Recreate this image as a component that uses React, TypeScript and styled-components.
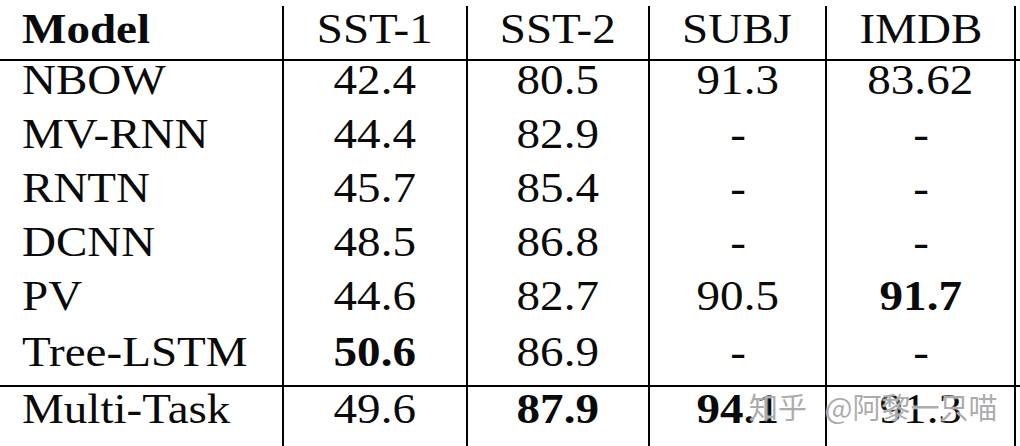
import React from "react";
import styled, { createGlobalStyle } from "styled-components";

const Global = createGlobalStyle`
  html, body { margin: 0; padding: 0; background: #ffffff; }
  body { width: 1020px; height: 446px; overflow: hidden; }
`;

const Page = styled.div`
  position: relative;
  width: 1020px;
  height: 446px;
  overflow: hidden;
  box-sizing: border-box;
  padding-top: 6px;
  background: #ffffff;
  font-family: "Liberation Serif", "Times New Roman", serif;
  color: #0a0a0a;
`;

const Row = styled.div<{ $h: number; $rule?: boolean }>`
  display: grid;
  grid-template-columns: 284px 184px 182px 177px 189px 4px;
  height: ${(p) => p.$h}px;
  box-sizing: border-box;
  border-bottom: ${(p) => (p.$rule ? "2px solid #000" : "none")};
`;

const Cell = styled.div<{ $first?: boolean; $pad: number }>`
  box-sizing: border-box;
  border-right: 2px solid #000;
  padding-top: ${(p) => p.$pad}px;
  padding-left: ${(p) => (p.$first ? 22 : 0)}px;
  text-align: ${(p) => (p.$first ? "left" : "center")};
  font-size: 42px;
  line-height: 38px;
  white-space: nowrap;
  overflow: visible;
`;

const Txt = styled.span<{ $bold?: boolean; $first?: boolean }>`
  display: inline-block;
  font-weight: ${(p) => (p.$bold ? 700 : 400)};
  transform: scaleX(1.12);
  transform-origin: ${(p) => (p.$first ? "left center" : "center center")};
`;

const Watermark = styled.div`
  position: absolute;
  left: 749px;
  top: 386px;
  display: flex;
  gap: 18px;
  font-family: "Noto Sans CJK SC", "Noto Sans", sans-serif;
  font-size: 29px;
  line-height: 40px;
  color: rgba(150, 150, 150, 0.8);
  text-shadow: 0 0 2px rgba(255, 255, 255, 0.95), 0 0 1px rgba(255, 255, 255, 0.95);
  white-space: nowrap;
`;

type Val = { t: string; b?: boolean };
const v = (s: string): Val => (s.endsWith("*") ? { t: s.slice(0, -1), b: true } : { t: s });

const header: Val[] = [{ t: "Model", b: true }, { t: "SST-1" }, { t: "SST-2" }, { t: "SUBJ" }, { t: "IMDB" }];

const body: string[][] = [
  ["NBOW", "42.4", "80.5", "91.3", "83.62"],
  ["MV-RNN", "44.4", "82.9", "-", "-"],
  ["RNTN", "45.7", "85.4", "-", "-"],
  ["DCNN", "48.5", "86.8", "-", "-"],
  ["PV", "44.6", "82.7", "90.5", "91.7*"],
  ["Tree-LSTM", "50.6*", "86.9", "-", "-"],
];

const multi: string[] = ["Multi-Task", "49.6", "87.9*", "94.1*", "91.3"];

function TableRow({ cells, h, pad, rule }: { cells: Val[]; h: number; pad: number; rule?: boolean }) {
  return (
    <Row $h={h} $rule={rule}>
      {cells.map((c, i) => (
        <Cell key={i} $first={i === 0} $pad={pad}>
          <Txt $bold={c.b} $first={i === 0}>
            {c.t}
          </Txt>
        </Cell>
      ))}
    </Row>
  );
}

export default function App() {
  return (
    <>
      <Global />
      <Page>
        <TableRow cells={header} h={55} pad={4} rule />
        {body.map((r, i) => (
          <TableRow
            key={i}
            cells={r.map(v)}
            h={i === body.length - 1 ? 56 : 54}
            pad={i === body.length - 1 ? 2 : 0}
            rule={i === body.length - 1}
          />
        ))}
        <TableRow cells={multi.map(v)} h={60} pad={3} />
        <Watermark>
          <span>知乎</span>
          <span>@阿黎一只喵</span>
        </Watermark>
      </Page>
    </>
  );
}
